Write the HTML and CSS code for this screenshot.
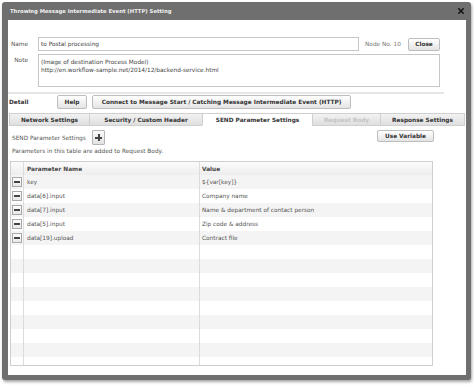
FILE: index.html
```html
<!DOCTYPE html>
<html>
<head>
<meta charset="utf-8">
<title>Throwing Message Intermediate Event (HTTP) Setting</title>
<link rel="stylesheet" href="styles.css">
</head>
<body>
<div class="dialog">
  <div class="titlebar">
    <span class="title">Throwing Message Intermediate Event (HTTP) Setting</span>
    <svg class="x-icon" width="6" height="6" viewBox="0 0 6 6"><path d="M0.8 0.8L5.2 5.2M5.2 0.8L0.8 5.2" stroke="#111" stroke-width="1.5" stroke-linecap="square"/></svg>
  </div>
  <div class="content">
    <div class="name-row">
      <span class="lbl">Name</span>
      <div class="input">to Postal processing</div>
      <span class="node">Node No. 10</span>
      <button class="btn btn-close">Close</button>
    </div>
    <div class="note-row">
      <span class="lbl lbl-note">Note</span>
      <div class="textarea">(Image of destination Process Model)<br>http://en.workflow-sample.net/2014/12/backend-service.html</div>
    </div>
    <div class="sep"></div>
    <div class="detail-row">
      <span class="detail">Detail</span>
      <button class="btn btn-help">Help</button>
      <button class="btn btn-connect">Connect to Message Start / Catching Message Intermediate Event (HTTP)</button>
    </div>
    <div class="tabs">
      <div class="tab t1">Network Settings</div>
      <div class="tab t2">Security / Custom Header</div>
      <div class="tab t3 active">SEND Parameter Settings</div>
      <div class="tab t4 disabled">Request Body</div>
      <div class="tab t5">Response Settings</div>
    </div>
    <div class="send-row">
      <span class="send-label">SEND Parameter Settings</span>
      <button class="icon-btn plus-btn"><span class="plus-h"></span><span class="plus-v"></span></button>
      <button class="btn btn-var">Use Variable</button>
    </div>
    <div class="desc">Parameters in this table are added to Request Body.</div>
    <div class="table">
      <div class="tr th">
        <div class="c c1"></div>
        <div class="c c2">Parameter Name</div>
        <div class="c c3">Value</div>
      </div>
      <div class="tr odd"><div class="c c1"><span class="minus"></span></div><div class="c c2">key</div><div class="c c3">${var[key]}</div></div>
      <div class="tr"><div class="c c1"><span class="minus"></span></div><div class="c c2">data[6].input</div><div class="c c3">Company name</div></div>
      <div class="tr odd"><div class="c c1"><span class="minus"></span></div><div class="c c2">data[7].input</div><div class="c c3">Name &amp; department of contact person</div></div>
      <div class="tr"><div class="c c1"><span class="minus"></span></div><div class="c c2">data[5].input</div><div class="c c3">Zip code &amp; address</div></div>
      <div class="tr odd"><div class="c c1"><span class="minus"></span></div><div class="c c2">data[19].upload</div><div class="c c3">Contract file</div></div>
      <div class="tr"><div class="c c1"></div><div class="c c2"></div><div class="c c3"></div></div>
      <div class="tr odd"><div class="c c1"></div><div class="c c2"></div><div class="c c3"></div></div>
      <div class="tr"><div class="c c1"></div><div class="c c2"></div><div class="c c3"></div></div>
      <div class="tr odd"><div class="c c1"></div><div class="c c2"></div><div class="c c3"></div></div>
      <div class="tr"><div class="c c1"></div><div class="c c2"></div><div class="c c3"></div></div>
      <div class="tr odd"><div class="c c1"></div><div class="c c2"></div><div class="c c3"></div></div>
      <div class="tr"><div class="c c1"></div><div class="c c2"></div><div class="c c3"></div></div>
      <div class="tr odd"><div class="c c1"></div><div class="c c2"></div><div class="c c3"></div></div>
      <div class="tr"><div class="c c1"></div><div class="c c2"></div><div class="c c3"></div></div>
    </div>
  </div>
</div>
</body>
</html>
```

FILE: styles.css
```css
* { box-sizing: border-box; margin: 0; padding: 0; }
html, body { width: 474px; height: 387px; overflow: hidden; }
body {
  background: #fff;
  font-family: "DejaVu Sans", Verdana, sans-serif;
  font-size: 5.8px;
  color: #3c3c3c;
}
.dialog {
  margin: 2px 0 0 2px;
  width: 469px;
  height: 378px;
  background: #6f6f6f;
  border-radius: 3px;
  padding: 0 5px 5px 6px;
  display: flex;
  flex-direction: column;
  box-shadow: 1px 2px 3px rgba(0,0,0,0.35);
}
.titlebar {
  height: 18px;
  flex: none;
  display: flex;
  align-items: center;
  justify-content: space-between;
  padding: 0 2px 0 2px;
}
.title { color: #f2f2f2; font-weight: bold; font-size: 5.3px; }
.x-icon { display: block; margin-top: -1px; }
.content {
  flex: 1;
  background: #fff;
  display: flex;
  flex-direction: column;
  align-items: flex-start;
}
.name-row {
  margin-top: 17px;
  height: 14px;
  display: flex;
  align-items: center;
}
.lbl { width: 20px; text-align: right; color: #555; margin-right: 10px; }
.input {
  width: 321px;
  height: 14px;
  border: 1px solid #c6c6c6;
  padding-left: 2px;
  display: flex;
  align-items: center;
  color: #444;
}
.node { width: 49px; padding-left: 6px; color: #777; }
.btn {
  font-family: inherit;
  font-size: 5.8px;
  font-weight: bold;
  color: #333;
  border: 1px solid #bdbdbd;
  border-radius: 2px;
  background: linear-gradient(#ffffff, #e4e4e4);
  display: flex;
  align-items: center;
  justify-content: center;
}
.btn-close { width: 32px; height: 13px; }
.note-row { margin-top: 3px; display: flex; align-items: flex-start; }
.lbl-note { padding-top: 3px; }
.textarea {
  width: 402px;
  height: 33px;
  border: 1px solid #c6c6c6;
  padding: 3px 2px;
  line-height: 8px;
  color: #444;
}
.sep { margin-top: 5px; width: 436px; height: 2px; background: #e6e6e6; }
.detail-row { margin-top: 1px; height: 14px; display: flex; align-items: center; }
.detail { width: 49px; padding-left: 1px; font-weight: bold; color: #333; }
.btn-help { width: 30px; height: 14px; margin-right: 5px; }
.btn-connect { width: 259px; height: 14px; }
.tabs { margin-top: 4px; margin-left: 1px; display: flex; height: 13px; }
.tab {
  height: 13px;
  display: flex;
  align-items: center;
  justify-content: center;
  font-weight: bold;
  color: #333;
  background: linear-gradient(#f2f2f2, #dfdfdf);
  border: 1px solid #cfcfcf;
  border-right: none;
}
.tab:last-child { border-right: 1px solid #cfcfcf; }
.t1 { width: 80px; }
.t2 { width: 113px; }
.t3 { width: 110px; }
.t4 { width: 68px; }
.t5 { width: 85px; }
.tab.active { background: #fff; border-bottom-color: #fff; }
.tab.disabled { color: #c4c4c4; }
.send-row { margin-top: 4px; width: 100%; height: 15px; display: flex; align-items: center; padding-left: 4px; }
.send-label { width: 80px; color: #555; }
.icon-btn {
  border: 1px solid #b5b5b5;
  border-radius: 1px;
  background: linear-gradient(#fafafa, #e2e2e2);
  position: relative;
}
.plus-btn { width: 13px; height: 15px; }
.plus-h { position: absolute; left: 2px; top: 5.5px; width: 7px; height: 2px; background: #444; }
.plus-v { position: absolute; left: 4.5px; top: 3px; width: 2px; height: 7px; background: #444; }
.btn-var { width: 57px; height: 12px; margin-left: auto; margin-right: 32px; align-self: flex-start; }
.desc { margin-top: 2px; padding-left: 4px; height: 8px; line-height: 8px; color: #555; }
.table {
  margin-top: 6px;
  margin-left: 2px;
  width: 423px;
  height: 205px;
  border: 1px solid #cfcfcf;
  overflow: hidden;
}
.tr { display: grid; grid-template-columns: 13px 176px 1fr; height: 14px; }
.tr.odd { background: #f4f4f4; }
.th { height: 13px; background: linear-gradient(#fbfbfb, #ededed); font-weight: bold; color: #444; }
.c { border-right: 1px solid #dcdcdc; display: flex; align-items: center; padding-left: 3px; color: #555; }
.c3 { border-right: none; padding-left: 2px; }
.th .c { color: #444; }
.c1 { padding-left: 1px; }
.minus {
  width: 10px;
  height: 10px;
  border: 1px solid #a8a8a8;
  background: linear-gradient(#ffffff, #e8e8e8);
  display: flex;
  align-items: center;
  justify-content: center;
}
.minus::before { content: ""; width: 6px; height: 2px; background: #444; }
```
